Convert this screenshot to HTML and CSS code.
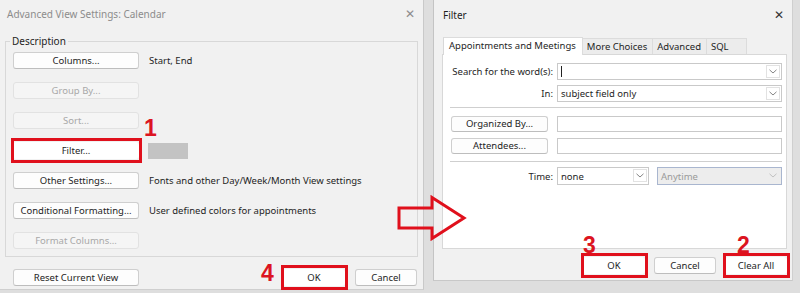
FILE: index.html
```html
<!DOCTYPE html>
<html>
<head>
<meta charset="utf-8">
<link rel="stylesheet" href="styles.css">
</head>
<body>
<div class="screen">
  <div class="dlg dlg-left">
    <div class="titlebar">
      <span class="title muted">Advanced View Settings: Calendar</span>
      <span class="close muted">✕</span>
    </div>
    <fieldset class="group">
      <legend>Description</legend>
      <div class="row"><button class="btn wide">Columns...</button><span class="desc">Start, End</span></div>
      <div class="row"><button class="btn wide dis">Group By...</button></div>
      <div class="row"><button class="btn wide dis">Sort...</button></div>
      <div class="row"><span class="mark hl"><button class="btn wide">Filter...</button><span class="num n1">1</span></span><span class="swatch"></span></div>
      <div class="row"><button class="btn wide">Other Settings...</button><span class="desc">Fonts and other Day/Week/Month View settings</span></div>
      <div class="row"><button class="btn wide">Conditional Formatting...</button><span class="desc">User defined colors for appointments</span></div>
      <div class="row"><button class="btn wide dis">Format Columns...</button></div>
    </fieldset>
    <div class="footer">
      <button class="btn wide">Reset Current View</button>
      <span class="spacer"></span>
      <span class="mark hl"><button class="btn small">OK</button><span class="num n4">4</span></span>
      <button class="btn small">Cancel</button>
    </div>
  </div>

  <div class="dlg dlg-right">
    <div class="titlebar">
      <span class="title">Filter</span>
      <span class="close">✕</span>
    </div>
    <div class="tabs">
      <span class="tab active">Appointments and Meetings</span>
      <span class="tab">More Choices</span>
      <span class="tab">Advanced</span>
      <span class="tab">SQL</span>
    </div>
    <div class="panel">
      <div class="frow">
        <label class="lbl">Search for the word(s):</label>
        <div class="field combo"><span class="caret-line"></span><span class="dd"><svg viewBox="0 0 8 5"><path d="M0.5 0.8 L4 4 L7.5 0.8" fill="none" stroke="#777" stroke-width="0.9"/></svg></span></div>
      </div>
      <div class="frow">
        <label class="lbl">In:</label>
        <div class="field combo"><span class="val">subject field only</span><span class="dd"><svg viewBox="0 0 8 5"><path d="M0.5 0.8 L4 4 L7.5 0.8" fill="none" stroke="#777" stroke-width="0.9"/></svg></span></div>
      </div>
      <div class="sep"></div>
      <div class="frow">
        <button class="btn pbtn">Organized By...</button>
        <div class="field"></div>
      </div>
      <div class="frow">
        <button class="btn pbtn">Attendees...</button>
        <div class="field"></div>
      </div>
      <div class="sep sep2"></div>
      <div class="frow">
        <label class="lbl">Time:</label>
        <div class="timeset">
          <div class="field combo none"><span class="val">none</span><span class="dd"><svg viewBox="0 0 8 5"><path d="M0.5 0.8 L4 4 L7.5 0.8" fill="none" stroke="#777" stroke-width="0.9"/></svg></span></div>
          <div class="field combo any"><span class="val">Anytime</span><span class="dd plain"><svg viewBox="0 0 8 5"><path d="M0.5 0.8 L4 4 L7.5 0.8" fill="none" stroke="#bbb" stroke-width="0.9"/></svg></span></div>
        </div>
      </div>
    </div>
    <div class="rfooter">
      <span class="mark hl"><button class="btn rsmall">OK</button><span class="num n3">3</span></span>
      <button class="btn rsmall">Cancel</button>
      <span class="mark hl"><button class="btn rsmall">Clear All</button><span class="num n2">2</span></span>
    </div>
  </div>

  <svg class="arrow" viewBox="0 0 72 46" width="72" height="46">
    <path d="M3 13 L36 13 L36 2.5 L68 23 L36 43.5 L36 33 L3 33 Z" fill="none" stroke="#e0101c" stroke-width="3" stroke-linejoin="miter"/>
  </svg>
</div>
</body>
</html>
```

FILE: styles.css
```css
* { box-sizing: border-box; }
html, body { margin: 0; padding: 0; }
body {
  width: 800px;
  height: 293px;
  overflow: hidden;
  background: #dedede;
  font-family: "Noto Sans", "Open Sans", sans-serif;
  font-size: 9.5px;
  color: #1e1e1e;
}
.screen {
  position: relative;
  display: flex;
  align-items: flex-start;
  width: 800px;
  height: 293px;
  background: #dedede;
}
.dlg {
  background: #f1f1f1;
  display: flex;
  flex-direction: column;
}
.dlg-left {
  width: 424px;
  height: 290px;
  border-right: 1px solid #c9c9c9;
  border-bottom: 1px solid #cfcfcf;
}
.dlg-right {
  width: 360px;
  height: 281px;
  margin-left: 9px;
  border-left: 1px solid #c4c4c4;
  border-right: 1px solid #cfcfcf;
  border-bottom: 1px solid #c8c8c8;
}
.titlebar {
  height: 34px;
  display: flex;
  align-items: center;
  justify-content: space-between;
  padding: 0 8px 4px 8px;
  font-size: 10px;
}
.dlg-left .titlebar { height: 35px; padding: 0 8px 7px 7px; }
.muted { color: #8c8c8c; }
.close { font-size: 12px; line-height: 1; }
.dlg-right .title { padding-left: 1px; }
.dlg-right .close { color: #333; }

.group {
  margin: 0 5px 0 5px;
  padding: 5px 7px 7px 7px;
  border: 1px solid #d8d8d8;
  display: flex;
  flex-direction: column;
  gap: 13px;
  min-width: 0;
}
.group legend {
  padding: 0 2px;
  margin-left: -3px;
  font-size: 10px;
  line-height: 12px;
  color: #1e1e1e;
}
.row {
  display: flex;
  align-items: center;
  gap: 10px;
  height: 17px;
}
.btn {
  font-family: inherit;
  font-size: 9.5px;
  color: #1e1e1e;
  background: #fdfdfd;
  border: 1px solid #cfcfcf;
  border-bottom-color: #bdbdbd;
  border-radius: 3px;
  height: 17px;
  padding: 0;
  line-height: 15px;
  margin: 0;
}
.btn.wide { width: 126px; }
.btn.small { width: 62px; }
.btn.dis { background: #f5f5f5; color: #a8a8a8; border-color: #e2e2e2; }
.desc { white-space: nowrap; }
.swatch {
  display: inline-block;
  width: 40px;
  height: 16px;
  background: #c3c3c3;
  margin-left: -1px;
}
.mark { position: relative; display: inline-flex; }
.mark.hl::after {
  content: "";
  position: absolute;
  top: -4px;
  bottom: -4px;
  left: -2px;
  right: -3px;
  border: 3px solid #e0101c;
  pointer-events: none;
}
.mark.hl .btn { background: #fff; border-color: #fff; }
.num {
  position: absolute;
  font-family: "Liberation Sans", Arial, sans-serif;
  font-weight: bold;
  font-size: 23px;
  line-height: 1;
  color: #dc1421;
}
.n1 { left: 131px; top: -25px; }
.n4 { left: -22px; top: -7px; }
.n3 { left: 0px; top: -23px; }
.n2 { left: 12px; top: -23px; }

.footer {
  display: flex;
  align-items: center;
  gap: 10px;
  margin-top: 12px;
  padding: 0 6px 0 13px;
}
.spacer { flex: 1; }

.tabs {
  display: flex;
  margin-left: 9px;
  height: 18px;
  align-items: flex-end;
  margin-top: 2px;
}
.tab {
  height: 16px;
  line-height: 15px;
  padding: 0 5px 0 4px;
  background: #ececec;
  border: 1px solid #dcdcdc;
  border-bottom: none;
  border-left: none;
  white-space: nowrap;
}
.tab.active {
  height: 18px;
  background: #fff;
  border-left: 1px solid #d8d8d8;
  padding: 0 6px 0 5px;
  position: relative;
  z-index: 1;
  margin-bottom: -1px;
}
.tab:last-child { padding-right: 17px; }
.panel {
  margin: 0 5px 0 8px;
  height: 195px;
  background: #fff;
  border: 1px solid #d8d8d8;
  padding: 8px 4px 0 7px;
  display: flex;
  flex-direction: column;
  gap: 6px;
}
.frow {
  display: flex;
  align-items: center;
  gap: 10px;
  height: 16px;
}
.lbl {
  width: 103px;
  margin-right: -6px;
  text-align: right;
  white-space: nowrap;
}
.frow > .field { flex: 1; }
.field {
  height: 17px;
  border: 1px solid #c9c9c9;
  background: #fff;
  position: relative;
  display: flex;
  align-items: center;
  padding-left: 3px;
}
.caret-line {
  width: 1px;
  height: 11px;
  background: #222;
}
.dd {
  position: absolute;
  right: 1px;
  top: 1px;
  width: 14px;
  height: 13px;
  border: 1px solid #e2e2e2;
  display: flex;
  align-items: center;
  justify-content: center;
}
.dd.plain { border-color: transparent; }
.dd svg { width: 8px; height: 5px; }
.sep {
  height: 1px;
  background: #cfcfcf;
  margin: 0 0 2px 0;
}
.sep2 { margin: 1px 0 0 0; }
.pbtn {
  width: 97px;
  height: 16px;
  line-height: 14px;
  margin-left: 1px;
}
.frow .pbtn + .field { margin-left: -1px; height: 16px; }
.timeset {
  flex: 1;
  display: flex;
  gap: 8px;
}
.timeset .none { flex: 0 0 92px; height: 18px; }
.timeset .any {
  flex: 1 1 auto;
  height: 18px;
  background: #ededed;
  border-color: #a9b6cf;
  color: #9a9a9a;
}
.rfooter {
  display: flex;
  justify-content: flex-end;
  align-items: center;
  gap: 9px;
  margin-top: 8px;
  padding-right: 5px;
}
.btn.rsmall { width: 62px; height: 17px; }

.arrow {
  position: absolute;
  left: 396px;
  top: 195px;
}
```
